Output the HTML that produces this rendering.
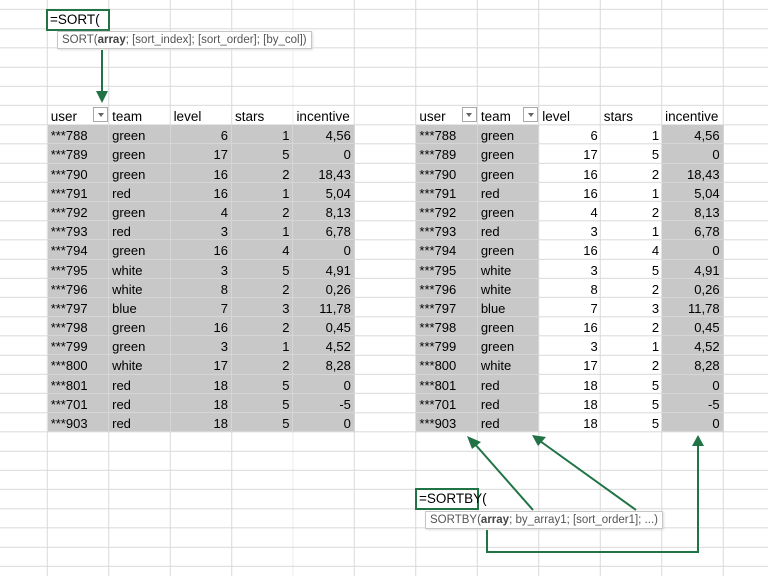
<!DOCTYPE html>
<html><head><meta charset="utf-8"><style>
body{margin:0;width:768px;height:576px;overflow:hidden;background:#fff;position:relative;font-family:"Liberation Sans",sans-serif;font-size:13px;color:#000}
.grid{position:absolute;left:0;top:0;width:768px;height:576px;
background-image:repeating-linear-gradient(to right,transparent 0,transparent 60.45px,#d9d9d9 60.45px,#d9d9d9 61.45px),repeating-linear-gradient(to bottom,transparent 0,transparent 18.2px,#d9d9d9 18.2px,#d9d9d9 19.2px);
background-position:-13.75px -9.2px;}
.t{position:absolute;top:106px;display:grid;grid-template-columns:repeat(5,61.45px);grid-auto-rows:19.2px}
.t div{padding:0 3px;line-height:22px;white-space:nowrap;overflow:hidden;box-sizing:border-box}
.g{background:#c8c8c8;border-right:1px solid #d6d6d6;border-bottom:1px solid #d6d6d6}
.r{text-align:right}
.h{position:relative;font-size:13.5px}
.dd{position:absolute;right:1px;top:1px;width:15px;height:15px;border:1px solid #a8a8a8;background:#fff;box-sizing:border-box}
.dd:after{content:"";position:absolute;left:3.5px;top:5px;border-left:3.5px solid transparent;border-right:3.5px solid transparent;border-top:4px solid #666}
.box{position:absolute;border:2px solid #217346;box-sizing:border-box;background:#fff;font-size:13.5px;padding-left:2px;line-height:18px}
.tip{position:absolute;border:1px solid #c6c6c6;background:#fff;color:#555;font-size:11.5px;line-height:16px;padding:0 4px;box-shadow:1px 1px 2px #ddd;white-space:nowrap}
.tip b{color:#444}
</style></head><body>
<div class="grid"></div>

<div class="t" style="left:47.7px">
<div class="h">user<span class="dd"></span></div><div class="h">team</div><div class="h">level</div><div class="h">stars</div><div class="h">incentive</div>
<div class="g">***788</div><div class="g">green</div><div class="g r">6</div><div class="g r">1</div><div class="g r">4,56</div>
<div class="g">***789</div><div class="g">green</div><div class="g r">17</div><div class="g r">5</div><div class="g r">0</div>
<div class="g">***790</div><div class="g">green</div><div class="g r">16</div><div class="g r">2</div><div class="g r">18,43</div>
<div class="g">***791</div><div class="g">red</div><div class="g r">16</div><div class="g r">1</div><div class="g r">5,04</div>
<div class="g">***792</div><div class="g">green</div><div class="g r">4</div><div class="g r">2</div><div class="g r">8,13</div>
<div class="g">***793</div><div class="g">red</div><div class="g r">3</div><div class="g r">1</div><div class="g r">6,78</div>
<div class="g">***794</div><div class="g">green</div><div class="g r">16</div><div class="g r">4</div><div class="g r">0</div>
<div class="g">***795</div><div class="g">white</div><div class="g r">3</div><div class="g r">5</div><div class="g r">4,91</div>
<div class="g">***796</div><div class="g">white</div><div class="g r">8</div><div class="g r">2</div><div class="g r">0,26</div>
<div class="g">***797</div><div class="g">blue</div><div class="g r">7</div><div class="g r">3</div><div class="g r">11,78</div>
<div class="g">***798</div><div class="g">green</div><div class="g r">16</div><div class="g r">2</div><div class="g r">0,45</div>
<div class="g">***799</div><div class="g">green</div><div class="g r">3</div><div class="g r">1</div><div class="g r">4,52</div>
<div class="g">***800</div><div class="g">white</div><div class="g r">17</div><div class="g r">2</div><div class="g r">8,28</div>
<div class="g">***801</div><div class="g">red</div><div class="g r">18</div><div class="g r">5</div><div class="g r">0</div>
<div class="g">***701</div><div class="g">red</div><div class="g r">18</div><div class="g r">5</div><div class="g r">-5</div>
<div class="g">***903</div><div class="g">red</div><div class="g r">18</div><div class="g r">5</div><div class="g r">0</div>
</div>

<div class="t" style="left:416.4px">
<div class="h">user<span class="dd"></span></div><div class="h">team<span class="dd"></span></div><div class="h">level</div><div class="h">stars</div><div class="h">incentive</div>
<div class="g">***788</div><div class="g">green</div><div class="r">6</div><div class="r">1</div><div class="g r">4,56</div>
<div class="g">***789</div><div class="g">green</div><div class="r">17</div><div class="r">5</div><div class="g r">0</div>
<div class="g">***790</div><div class="g">green</div><div class="r">16</div><div class="r">2</div><div class="g r">18,43</div>
<div class="g">***791</div><div class="g">red</div><div class="r">16</div><div class="r">1</div><div class="g r">5,04</div>
<div class="g">***792</div><div class="g">green</div><div class="r">4</div><div class="r">2</div><div class="g r">8,13</div>
<div class="g">***793</div><div class="g">red</div><div class="r">3</div><div class="r">1</div><div class="g r">6,78</div>
<div class="g">***794</div><div class="g">green</div><div class="r">16</div><div class="r">4</div><div class="g r">0</div>
<div class="g">***795</div><div class="g">white</div><div class="r">3</div><div class="r">5</div><div class="g r">4,91</div>
<div class="g">***796</div><div class="g">white</div><div class="r">8</div><div class="r">2</div><div class="g r">0,26</div>
<div class="g">***797</div><div class="g">blue</div><div class="r">7</div><div class="r">3</div><div class="g r">11,78</div>
<div class="g">***798</div><div class="g">green</div><div class="r">16</div><div class="r">2</div><div class="g r">0,45</div>
<div class="g">***799</div><div class="g">green</div><div class="r">3</div><div class="r">1</div><div class="g r">4,52</div>
<div class="g">***800</div><div class="g">white</div><div class="r">17</div><div class="r">2</div><div class="g r">8,28</div>
<div class="g">***801</div><div class="g">red</div><div class="r">18</div><div class="r">5</div><div class="g r">0</div>
<div class="g">***701</div><div class="g">red</div><div class="r">18</div><div class="r">5</div><div class="g r">-5</div>
<div class="g">***903</div><div class="g">red</div><div class="r">18</div><div class="r">5</div><div class="g r">0</div>
</div>

<div class="box" style="left:46px;top:9px;width:64px;height:22px">=SORT(</div>
<div class="tip" style="left:57px;top:31px">SORT(<b>array</b>; [sort_index]; [sort_order]; [by_col])</div>
<div class="box" style="left:415px;top:488px;width:64px;height:22px">=SORTBY(</div>
<div class="tip" style="left:425px;top:511px">SORTBY(<b>array</b>; by_array1; [sort_order1]; ...)</div>

<svg style="position:absolute;left:0;top:0" width="768" height="576">
<g stroke="#217346" stroke-width="2" fill="none">
<line x1="102" y1="50" x2="102" y2="92"/>
<line x1="533" y1="510" x2="474" y2="443"/>
<line x1="636" y1="510" x2="540" y2="441"/>
<polyline points="487,530 487,552 698,552 698,445"/>
</g>
<g fill="#217346">
<polygon points="96,91 108,91 102,103"/>
<polygon points="467,436 481,442 472,449"/>
<polygon points="532,435 546,437 538,446"/>
<polygon points="692,446 704,446 698,435"/>
</g>
</svg>
</body></html>
